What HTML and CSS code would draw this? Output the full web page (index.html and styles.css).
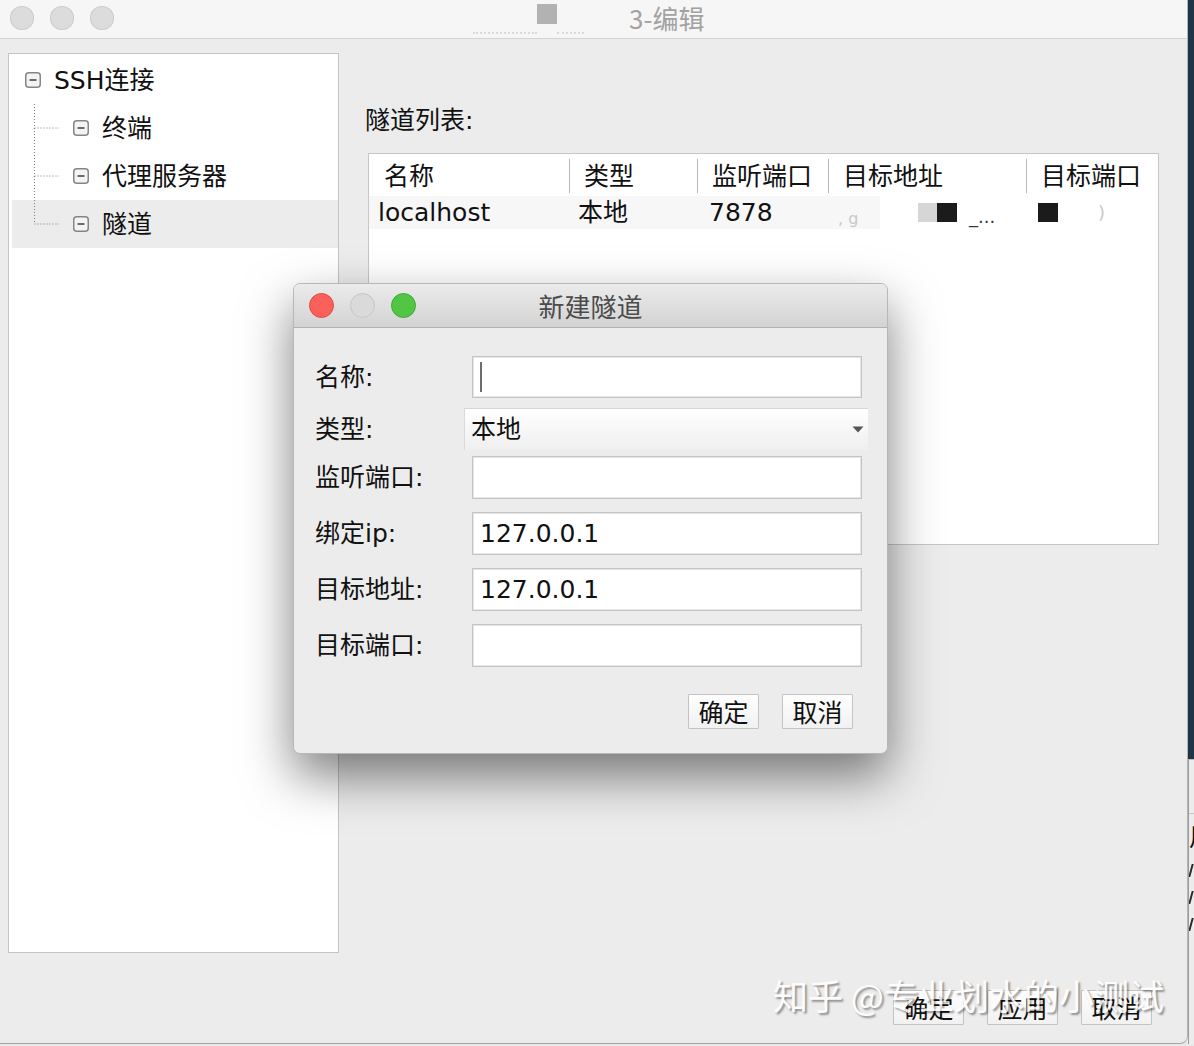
FILE: index.html
```html
<!DOCTYPE html>
<html lang="zh-CN">
<head>
    <meta charset="UTF-8">
    <meta name="viewport" content="width=device-width, initial-scale=1.0">
    <title>隧道编辑</title>
    <link rel="stylesheet" href="styles.css">
</head>
<body>
<div class="desk">
    <div class="window">
        <div class="titlebar">
            <div class="lights">
                <span class="light"></span>
                <span class="light"></span>
                <span class="light"></span>
            </div>
            <div class="title">
                <span class="smudge"></span>
                <span class="blot"></span>
                <span class="smudge short"></span>
                <span class="title-text">3-编辑</span>
            </div>
        </div>

        <div class="main">
            <div class="tree">
                <div class="node root">
                    <svg class="toggle" viewBox="0 0 16 16"><rect x="0.75" y="0.75" width="14.5" height="14.5" rx="3" fill="#f3f3f3" stroke="#858585" stroke-width="1.5"/><path d="M4.5 8h7" stroke="#4a4a4a" stroke-width="1.6"/></svg>
                    <span>SSH连接</span>
                </div>
                <div class="node child">
                    <svg class="branch" viewBox="0 0 27 48"><path d="M1.5 0V48M1.5 24H26" stroke="#7d7d7d" stroke-dasharray="1 2" fill="none"/></svg>
                    <svg class="toggle" viewBox="0 0 16 16"><rect x="0.75" y="0.75" width="14.5" height="14.5" rx="3" fill="#f3f3f3" stroke="#858585" stroke-width="1.5"/><path d="M4.5 8h7" stroke="#4a4a4a" stroke-width="1.6"/></svg>
                    <span>终端</span>
                </div>
                <div class="node child">
                    <svg class="branch" viewBox="0 0 27 48"><path d="M1.5 0V48M1.5 24H26" stroke="#7d7d7d" stroke-dasharray="1 2" fill="none"/></svg>
                    <svg class="toggle" viewBox="0 0 16 16"><rect x="0.75" y="0.75" width="14.5" height="14.5" rx="3" fill="#f3f3f3" stroke="#858585" stroke-width="1.5"/><path d="M4.5 8h7" stroke="#4a4a4a" stroke-width="1.6"/></svg>
                    <span>代理服务器</span>
                </div>
                <div class="node child selected">
                    <svg class="branch" viewBox="0 0 27 48"><path d="M1.5 0V24H26" stroke="#7d7d7d" stroke-dasharray="1 2" fill="none"/></svg>
                    <svg class="toggle" viewBox="0 0 16 16"><rect x="0.75" y="0.75" width="14.5" height="14.5" rx="3" fill="#f3f3f3" stroke="#858585" stroke-width="1.5"/><path d="M4.5 8h7" stroke="#4a4a4a" stroke-width="1.6"/></svg>
                    <span>隧道</span>
                </div>
            </div>

            <div class="tunnels">
                <div class="caption">隧道列表:</div>
                <div class="table">
                    <div class="thead">
                        <div class="th">名称</div>
                        <div class="th">类型</div>
                        <div class="th">监听端口</div>
                        <div class="th">目标地址</div>
                        <div class="th">目标端口</div>
                    </div>
                    <div class="tr">
                        <div class="td">localhost</div>
                        <div class="td">本地</div>
                        <div class="td wide">7878</div>
                        <div class="td redact">
                            <span class="faint">, g</span>
                            <b class="blk grey"></b><b class="blk"></b>
                            <span class="dots">_...</span>
                        </div>
                        <div class="td redact last">
                            <b class="blk"></b>
                            <span class="faint paren">)</span>
                        </div>
                    </div>
                </div>
            </div>
        </div>

        <div class="footer">
            <button class="btn">确定</button>
            <button class="btn">应用</button>
            <button class="btn">取消</button>
        </div>

        <div class="dialog">
            <div class="dlg-bar">
                <div class="dlg-lights">
                    <span class="dot red"></span>
                    <span class="dot grey"></span>
                    <span class="dot green"></span>
                </div>
                <div class="dlg-title">新建隧道</div>
                <div></div>
            </div>
            <div class="dlg-body">
                <div class="frow r-name">
                    <label>名称:</label>
                    <div class="input"><span class="caret"></span></div>
                </div>
                <div class="frow r-type">
                    <label>类型:</label>
                    <div class="select">
                        <span>本地</span>
                        <svg class="arrow" viewBox="0 0 12 7"><path d="M0.5 0.5h11L6 6.5z" fill="#555"/></svg>
                    </div>
                </div>
                <div class="frow r-std">
                    <label>监听端口:</label>
                    <div class="input"></div>
                </div>
                <div class="frow r-std">
                    <label>绑定ip:</label>
                    <div class="input">127.0.0.1</div>
                </div>
                <div class="frow r-std">
                    <label>目标地址:</label>
                    <div class="input">127.0.0.1</div>
                </div>
                <div class="frow r-std r-last">
                    <label>目标端口:</label>
                    <div class="input"></div>
                </div>
                <div class="dlg-actions">
                    <button class="btn">确定</button>
                    <button class="btn">取消</button>
                </div>
            </div>
        </div>

        <div class="watermark">知乎 @专业划水的小测试</div>
    </div>

    <div class="side">
        <div class="side-win">
            <div class="sw-bar"></div>
            <div class="sw-glyph">用</div>
            <span class="tick"></span>
            <span class="tick"></span>
            <span class="tick"></span>
        </div>
    </div>
</div>
</body>
</html>
```

FILE: styles.css
```css
body {
    margin: 0;
    width: 1194px;
    height: 1046px;
    overflow: hidden;
    background: #e9e9e9;
    font-family: "DejaVu Sans", "Noto Sans CJK SC", sans-serif;
    font-size: 25px;
    color: #111;
}
.desk {
    display: flex;
    height: 1046px;
}
.window {
    position: relative;
    width: 1188px;
    height: 1044px;
    box-sizing: border-box;
    background: #ececec;
    border-right: 1px solid #b5b5b5;
    border-bottom: 1px solid #a3a3a3;
    border-bottom-right-radius: 8px;
    flex: none;
}

/* title bar */
.titlebar {
    height: 38px;
    display: flex;
    align-items: center;
    padding-left: 10px;
    background: #f6f6f6;
    border-bottom: 1px solid #d2d2d2;
}
.lights {
    display: flex;
    gap: 16px;
    margin-top: -2px;
}
.light {
    width: 24px;
    height: 24px;
    border-radius: 50%;
    background: #dcdcdc;
    box-shadow: inset 0 0 0 1px #cdcdcd;
}
.title {
    display: flex;
    align-items: center;
    margin-left: 359px;
    color: #a2a2a2;
}
.smudge {
    width: 64px;
    height: 12px;
    margin-top: 16px;
    border-bottom: 2px dotted #dadada;
}
.smudge.short {
    width: 27px;
}
.blot {
    width: 20px;
    height: 20px;
    margin-bottom: 10px;
    background: #b2b2b2;
}
.title-text {
    margin-left: 45px;
    margin-top: -3px;
    font-size: 26px;
    font-family: "Noto Sans CJK SC", sans-serif;
}

/* main area */
.main {
    display: flex;
    gap: 26px;
    padding: 14px 28px 0 8px;
    height: 900px;
}
.tree {
    width: 331px;
    height: 900px;
    box-sizing: border-box;
    flex: none;
    padding-top: 2px;
    background: #fff;
    border: 1px solid #c4c4c4;
}
.node {
    height: 48px;
    display: flex;
    align-items: center;
    gap: 13px;
    margin-left: 3px;
    line-height: 1;
}
.node.root {
    padding-left: 13px;
}
.node.child {
    padding-left: 21px;
}
.node.selected {
    background: #ececec;
}
.toggle {
    width: 16px;
    height: 16px;
    flex: none;
}
.branch {
    width: 27px;
    height: 48px;
    flex: none;
}
.tunnels {
    width: 794px;
    padding-top: 52px;
}
.caption {
    line-height: 32px;
}
.table {
    margin: 16px 0 0 3px;
    width: 791px;
    height: 392px;
    box-sizing: border-box;
    background: #fff;
    border: 1px solid #c6c6c6;
}
.thead, .tr {
    display: grid;
    grid-template-columns: 200px 128px 131px 198px 1fr;
}
.thead {
    height: 42px;
}
.th {
    display: flex;
    align-items: center;
    margin: 5px 0 3px;
    padding-left: 14px;
    border-left: 1px solid #b8b8b8;
    line-height: 1;
}
.th:first-child {
    border-left: none;
    padding-left: 15px;
}
.tr {
    height: 33px;
    background: #f7f7f7;
}
.td {
    display: flex;
    align-items: center;
    padding-left: 9px;
    white-space: nowrap;
    overflow: hidden;
    line-height: 1;
}
.td.wide {
    padding-left: 12px;
}
.td.redact {
    background: linear-gradient(90deg, #f7f7f7 52px, #fff 52px);
    padding-left: 10px;
}
.td.redact.last {
    background: #fff;
    padding-left: 12px;
}
.faint {
    width: 80px;
    color: #c9c9c9;
    font-size: 16px;
    padding-top: 12px;
}
.paren {
    width: auto;
    margin-left: 40px;
    padding-top: 0;
    font-size: 18px;
}
.blk {
    width: 20px;
    height: 19px;
    background: #1b1b1b;
}
.blk.grey {
    width: 19px;
    background: #d6d6d6;
}
.dots {
    margin-left: 12px;
    font-size: 18px;
    padding-top: 8px;
    color: #333;
}

/* bottom buttons */
.footer {
    display: flex;
    justify-content: flex-end;
    gap: 23px;
    margin-top: 37px;
    padding-right: 35px;
}
.btn {
    width: 71px;
    height: 35px;
    padding: 0;
    font-family: "Noto Sans CJK SC", sans-serif;
    font-size: 25px;
    line-height: 33px;
    color: #111;
    background: linear-gradient(#fefefe, #f1f1f1);
    border: 1px solid #c3c3c3;
    border-radius: 1px;
}

/* dialog */
.dialog {
    position: absolute;
    left: 293px;
    top: 283px;
    width: 595px;
    box-sizing: border-box;
    background: #ececec;
    border: 1px solid #b7b7b7;
    border-radius: 7px;
    box-shadow: 0 22px 50px rgba(0,0,0,0.5);
    overflow: hidden;
}
.dlg-bar {
    height: 43px;
    display: grid;
    grid-template-columns: 1fr auto 1fr;
    align-items: center;
    background: linear-gradient(#ebebeb, #d3d3d3);
    border-bottom: 1px solid #b1b1b1;
}
.dlg-lights {
    display: flex;
    gap: 16px;
    padding-left: 15px;
}
.dot {
    width: 25px;
    height: 25px;
    border-radius: 50%;
    box-sizing: border-box;
}
.dot.red {
    background: #fb605a;
    border: 1px solid #de4b45;
}
.dot.grey {
    background: #dadada;
    border: 1px solid #c6c6c6;
}
.dot.green {
    background: #52c545;
    border: 1px solid #3aa93a;
}
.dlg-title {
    color: #4b4b4b;
    font-size: 26px;
    font-family: "Noto Sans CJK SC", sans-serif;
}
.dlg-body {
    padding: 28px 19px 24px 21px;
}
.frow {
    display: flex;
    align-items: center;
}
.frow label {
    width: 149px;
    flex: none;
    line-height: 1;
}
.r-name {
    height: 42px;
    margin-bottom: 10px;
}
.r-type {
    height: 42px;
    margin-bottom: 6px;
}
.r-std {
    height: 43px;
    margin-bottom: 13px;
}
.r-std.r-last {
    margin-bottom: 0;
}
.input {
    flex: 1;
    height: 100%;
    box-sizing: border-box;
    margin: 0 6px 0 8px;
    padding-left: 7px;
    display: flex;
    align-items: center;
    background: #fff;
    border: 1px solid #c4c4c4;
    box-shadow: inset 0 0 0 1px #e6e6e6;
    line-height: 1;
}
.caret {
    width: 2px;
    height: 30px;
    background: #6d6d6d;
}
.select {
    flex: 1;
    height: 100%;
    box-sizing: border-box;
    padding: 0 4px 0 6px;
    display: flex;
    align-items: center;
    justify-content: space-between;
    background: linear-gradient(#ffffff, #efefef);
    border-top: 1px solid #d6d6d6;
    border-left: 1px solid #dadada;
    line-height: 1;
}
.arrow {
    width: 12px;
    height: 7px;
}
.dlg-actions {
    display: flex;
    justify-content: flex-end;
    gap: 23px;
    margin-top: 27px;
    padding-right: 15px;
}

/* watermark */
.watermark {
    position: absolute;
    left: 773px;
    top: 975px;
    font-family: "Noto Sans CJK SC", sans-serif;
    font-size: 35px;
    line-height: 40px;
    color: #fff;
    white-space: nowrap;
    opacity: 0.85;
    text-shadow: 2px 2px 2px rgba(0,0,0,0.45);
}

/* desktop strip on the right */
.side {
    flex: 1;
    display: flex;
    flex-direction: column;
    background: #1d3546;
    height: 1044px;
}
.side-win {
    margin-top: 759px;
    flex: 1;
    background: #ececec;
    border-top: 1px solid #bcbcbc;
    border-left: 1px solid #9c9c9c;
    overflow: hidden;
}
.sw-bar {
    height: 53px;
    border-bottom: 1px solid #c6c6c6;
}
.sw-glyph {
    margin-top: 6px;
    font-family: "Noto Sans CJK SC", sans-serif;
    font-size: 25px;
    line-height: 30px;
    width: 40px;
}
.tick {
    display: block;
    width: 2px;
    height: 13px;
    margin: 14px 0 0 1px;
    background: #2a2a2a;
    transform: skewX(-15deg);
}
```
